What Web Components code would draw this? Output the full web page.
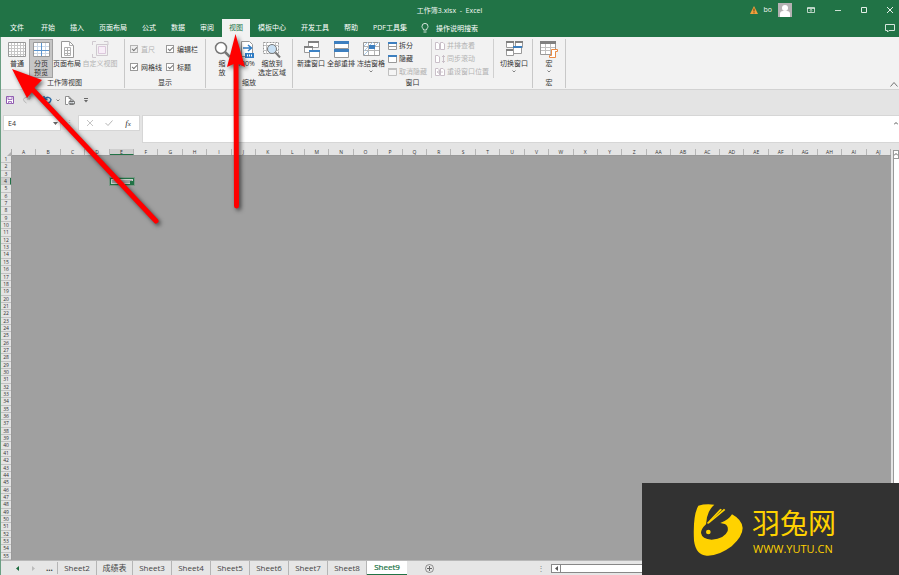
<!DOCTYPE html>
<html lang="zh-CN">
<head>
<meta charset="utf-8">
<title>工作簿3.xlsx - Excel</title>
<style>
  html, body { margin: 0; height: 100%; overflow: hidden; }
  body { font-family: "Open Sans", "Noto Sans CJK SC", sans-serif; font-size: 7px; color: #333; }
</style>
</head>
<body>
<excel-window></excel-window>
<script>
const RESET = `*{box-sizing:border-box}
button{font:inherit;color:inherit;background:none;border:0;padding:0;margin:0;cursor:pointer}
svg{display:block;flex:none}`;

const define = (name, css, html, setup) => customElements.define(name, class extends HTMLElement {
  constructor() {
    super();
    const t = document.createElement('template');
    t.innerHTML = `<style>${RESET}${css}</style>${typeof html === 'function' ? html(this) : html}`;
    this.attachShadow({ mode: 'open' }).append(t.content.cloneNode(true));
    if (setup) setup(this);
  }
});

const page = 'fill="#fff" stroke="#999"';
const ICONS = {
  normal: [18, 17, `<path d="M.5 1.500h17v14H.5z" ${page}/><path d="M3.500 2v13M6.500 2v13M9.500 2v13M12.500 2v13M15.500 2v13M1 4.500h16M1 7.500h16M1 10.500h16M1 13.500h16" stroke="#c6c6c6" fill="none"/>`],
  pagebreak: [17, 17, `<path d="M.5 1.500h16v14H.5z" ${page}/><path d="M4.500 2v13M12.500 2v13M1 5.500h15M1 12.500h15" stroke="#ccd9e8"/><path d="M8.500 2v13M1 9.500h15" stroke="#5b95cf"/>`],
  layout: [14, 17, `<path d="M1.500.5h8l4 4v12h-12z" ${page}/><path d="M9.500.5v4h4M4.500 6.500h6v8h-6zM4 9.500h7M4 12.500h7M7.500 6v9" fill="none" stroke="#b0b0b0"/>`],
  custom: [17, 17, `<g fill="none" stroke="#cfc9cf"><path d="M.5 4V.5H4M12 .5h4V4M.5 13v3.500H4"/><path d="M4.500 3.500h11v11h-11z"/><path d="M6.500 5.500h7v7h-7z" fill="#f8eef8" stroke="#dcc8dc"/></g>`],
  zoom: [17, 17, `<circle cx="7" cy="7" r="5.500" fill="#fff" stroke="#777" stroke-width="1.500"/><path d="M11 11l5 5" stroke="#777" stroke-width="2.500"/>`],
  hundred: [17, 17, `<path d="M3.500.5h8l3 3v12h-11z" ${page}/><path d="M5 7h8m-3-3 3.500 3L10 10" fill="none" stroke="#2f7cc4" stroke-width="1.500"/><path d="M7 12h9v5H7z" fill="#2f7cc4"/><path d="M9.500 13.500v2M11.500 13.500v2M13.500 13.500v2" stroke="#fff"/>`],
  zoomsel: [18, 17, `<path d="M.5 1.500h15v11H.5z" ${page} stroke-dasharray="2 1"/><path d="M3.500 2v10M12.500 2v10M1 4.500h14M1 9.500h14" stroke="#c0c0c0"/><circle cx="9" cy="8" r="4.500" fill="#c8e0f4" stroke="#777"/><path d="m12.500 11.500 4.500 5" stroke="#777" stroke-width="2"/>`],
  newwin: [17, 17, `<g ${page}><path d="M5.500 1.500h10v5h-10z"/><path d="M1.500 6.500h8v5h-8z"/><path d="M6.500 10.500h10v6h-10z"/></g><path d="M5 0h11v2H5zM1 5h9v2H1z" fill="#808080"/><path d="M6 9h11v2H6z" fill="#3d82c4"/>`],
  arrange: [15, 17, `<path d="M.5 1.500h14v6H.5zM.5 9.500h14v7H.5z" ${page}/><path d="M0 0h15v3H0zM0 8h15v3H0z" fill="#3d7fbf"/>`],
  freeze: [17, 17, `<path d="M.5 1.500h16v13H.5z" ${page}/><path d="M5.500 2v12M11.500 2v12M1 5.500h15M1 9.500h15" stroke="#b5b5b5"/><path d="M1 5l4-4M1 10l4-4M6 5l4-4M12 5l4-4M1 14l4-4" stroke="#a9c8e4"/><path d="M6 4h6v4H6z" fill="#3d7fbf"/>`],
  switch: [17, 17, `<g ${page}><path d="M.5 1.500h7v5h-7zM9.500 1.500h7v5h-7zM.5 9.500h7v5h-7z"/><path d="M7.500 6.500h8v6h-8z"/></g><path d="M0 0h8v2H0zM9 0h8v2H9zM0 8h7v2H0z" fill="#808080"/><path d="M7 5h9v2H7z" fill="#3d7fbf"/>`],
  macro: [18, 17, `<path d="M.5 1.500h15v12H.5z" ${page}/><path d="M0 0h16v3H0z" fill="#808080"/><path d="M5.500 3v10M10.500 3v10M1 6.500h14M1 9.500h14" stroke="#c0c0c0"/><path d="M11.500 8.500h6v2h-2v6h-6v-2h2z" fill="#fff" stroke="#e88a45"/>`],
  split: [9, 8, `<path d="M.5.5h8v7h-8zM0 4.500h9" ${page}/><path d="M0 0h9v2H0z" fill="#3d7fbf"/>`],
  hide: [9, 8, `<path d="M.5.5h8v7h-8z" ${page}/><path d="M0 0h9v2H0z" fill="#3d7fbf"/>`],
  unhide: [9, 8, `<path d="M.5.5h8v7h-8z" fill="#f5f5f5" stroke="#c0c0c0"/><path d="M0 0h9v2H0z" fill="#c0c0c0"/>`],
  side: [10, 8, `<path d="M.5.5H3l1.500 1.500v5.500h-4zM5.500.5H8L9.500 2v5.500h-4z" fill="#fff" stroke="#c9bfc8"/>`],
  sync: [10, 8, `<path d="M.5.5H3l1.500 1.500v5.500h-4z" fill="#fff" stroke="#c9bfc8"/><path d="M8.500 0v8M7 2l1.500-1.500L9.900 2M7 6l1.500 1.500L9.900 6" fill="none" stroke="#c9bfc8"/>`],
  reset: [10, 8, `<path d="M.5.5H3l1.500 1.500v5.500h-4zM5.500.5H8L9.500 2v5.500h-4z" fill="#fff" stroke="#c9bfc8"/><path d="M2 4h6M4 2.500 2 4l2 1.500" fill="none" stroke="#c9bfc8" stroke-width=".8"/>`],
  bulb: [8, 10, `<path d="M2.500 7C2.500 5.500 1 5 1 3.400a3 3 0 0 1 6 0C7 5 5.500 5.500 5.500 7zM2.500 9h3" fill="none" stroke="#fff" stroke-width=".8"/>`],
  comment: [10, 9, `<path d="M.5.5h9v6H4L2.500 8V6.500h-2z" fill="none" stroke="#d5e6dc"/>`],
  warn: [8, 8, `<path d="M4 0l4 8H0z" fill="#f0a03c"/><path d="M4 2.500v3M4 6.300v1" stroke="#5c3a12"/>`],
  user: [14, 14, `<path d="M0 0h14v14H0z" fill="#b5b1b3"/><circle cx="7" cy="5" r="3" fill="#fff"/><path d="M2 14V11q0-3 3-3h4q3 0 3 3v3z" fill="#fff"/>`],
  ribbonopt: [8, 6, `<path d="M.5.5h7v5h-7zM0 1.500h8M4 5V2.500M2.800 3.500 4 2.300l1.200 1.200" fill="none" stroke="#e2eee6" stroke-width=".8"/>`],
  min: [6, 6, `<path d="M0 3.500h6" stroke="#cde0d4"/>`],
  max: [6, 6, `<path d="M.5.5h5v5h-5z" fill="none" stroke="#e2eee6"/>`],
  close: [6, 6, `<path d="m0 0 6 6M6 0 0 6" stroke="#e8f2ec"/>`],
  save: [8, 8, `<path d="M.5.5h7v7h-7z" fill="#fff" stroke="#8f5ab0"/><path d="M2 .5h4v3H2zM2.500 5.500h3v2h-3z" fill="#f0e4f6" stroke="#8f5ab0" stroke-width=".8"/>`],
  redo: [9, 8, `<path d="M8 0v3H5M8 3Q3-.5 1.500 3.500q0 2 3 3.500" fill="none" stroke="#b8b8b8"/>`],
  undo: [9, 8, `<path d="M1 0v3.500h3.500M1 3Q6-.5 8 3.500q0 2.500-3 4" fill="none" stroke="#2d6da8" stroke-width="1.500"/>`],
  preview: [10, 9, `<path d="M3 8.500H.5v-8H4l2 2v2M4 .5v2h2" fill="#fff" stroke="#777" stroke-width=".8"/><path d="M4 5.500h5.500v2.500H4zM5.200 4h3v1.500h-3zM5.200 7.200h3v1.400h-3z" fill="#e8eef4" stroke="#666" stroke-width=".8"/>`],
  down: [4, 3, `<path d="m.5.5 1.500 1.500L3.500.5" fill="none" stroke="#666" stroke-width=".8"/>`],
  tri: [5, 3, `<path d="M0 0h5L2.500 3z" fill="#666"/>`],
  more: [4, 5, `<path d="M0 .5h4" stroke="#666"/><path d="M0 2h4L2 4.500z" fill="#666"/>`],
  collapse: [8, 5, `<path d="m.5 4.500 3.500-4 3.500 4" fill="none" stroke="#666" stroke-width=".9"/>`],
  up: [4, 3, `<path d="m0 2.500 2-2 2 2" fill="none" stroke="#555"/>`],
  cancel: [6, 6, `<path d="m0 0 6 6M6 0 0 6" stroke="#b5b5b5" stroke-width=".8"/>`],
  ok: [8, 6, `<path d="m.5 3 2.500 2.500L7.500.5" fill="none" stroke="#b5b5b5"/>`],
  left: [3, 5, `<path d="M3 0v5L0 2.500z" fill="#1b6b3d"/>`],
  right: [3, 5, `<path d="M0 0v5l3-2.500z" fill="#bcbcbc"/>`],
  sleft: [3, 5, `<path d="M3 0v5L0 2.500z" fill="#555"/>`],
  add: [9, 9, `<circle cx="4.500" cy="4.500" r="4" fill="none" stroke="#777" stroke-width=".8"/><path d="M2 4.500h5M4.500 2v5" stroke="#666"/>`],
  corner: [4, 4, `<path d="M4 0v4H0z" fill="#b0b0b0"/>`]
};
const icon = n => { const [w, h, b] = ICONS[n]; return `<svg width="${w}" height="${h}" viewBox="0 0 ${w} ${h}" aria-hidden="true">${b}</svg>`; };

/* title bar */
define('title-bar', `
:host{display:grid;grid-template-columns:1fr auto 1fr;align-items:center;height:19px;background:#217346;color:#f2f8f4}
.title{grid-column:2;white-space:pre}
.right{display:flex;align-items:center;justify-content:flex-end;gap:6px;padding-right:6px}
.win{display:flex;gap:20px;margin-left:9px}
button{display:flex}`,
`<span class="title">工作簿3.xlsx  -  Excel</span>
<div class="right">${icon('warn')}<span>bo</span>${icon('user')}
<div class="win"><button aria-label="功能区显示选项">${icon('ribbonopt')}</button><button aria-label="最小化">${icon('min')}</button><button aria-label="最大化">${icon('max')}</button><button aria-label="关闭">${icon('close')}</button></div></div>`);

/* ribbon tabs */
define('ribbon-tab', `
:host{display:block}
button{display:block;height:18px;padding:0 7px 2px;color:#fff;white-space:nowrap}
:host([active]) button{background:#f2f2f2;color:#217346}`,
`<button role="tab"><slot></slot></button>`);

define('ribbon-tabs', `
:host{display:flex;height:18px;background:#217346;gap:1px;padding:0 4px 0 3px;color:#fff;align-items:center}
ribbon-tab:first-of-type{margin-right:2px}
.tell{display:flex;align-items:center;gap:7px;margin-left:6px;white-space:nowrap}
.note{margin-left:auto}`,
`${['文件', '开始', '插入', '页面布局', '公式', '数据', '审阅', '视图', '模板中心', '开发工具', '帮助', 'PDF工具集']
  .map(t => `<ribbon-tab${t === '视图' ? ' active' : ''}>${t}</ribbon-tab>`).join('')}
<button class="tell">${icon('bulb')}<span>操作说明搜索</span></button><button class="note" aria-label="批注">${icon('comment')}</button>`);

/* ribbon pieces */
define('ribbon-group', `
:host{display:flex;flex-direction:column;border-right:1px solid #c8c8c8;margin:2px 0 1px;flex:none}
.body{display:flex;flex:1;align-items:flex-start}
.label{text-align:center;line-height:9px;height:10px}`,
h => `<div class="body"><slot></slot></div><div class="label">${h.getAttribute('label')}</div>`);

define('big-button', `
:host{display:block;flex:none}
button{display:flex;flex-direction:column;align-items:center;width:100%;height:39px;padding-top:2px;line-height:9px;white-space:nowrap}
.pic{height:17px}
.pic+span{margin-top:1px}
.chev{margin-top:2px}
:host([active]) button{background:#c6c6c6;outline:1px solid #a0a0a0;outline-offset:-1px}
:host([off]) button{color:#b3b3b3}`,
h => `<button>${`<span class="pic">${icon(h.getAttribute('icon'))}</span>`}<span>${h.getAttribute('label').replace('|', '<br>')}</span>${h.hasAttribute('menu') ? `<span class="chev">${icon('down')}</span>` : ''}</button>`);

define('small-button', `
:host{display:block}
button{display:flex;align-items:center;gap:2px;height:13px;line-height:9px;white-space:nowrap}
:host([off]) button{color:#b3b3b3}`,
h => `<button>${icon(h.getAttribute('icon'))}<span>${h.getAttribute('label')}</span></button>`);

define('check-item', `
:host{display:block}
label{display:flex;align-items:center;gap:3px;height:18px;white-space:nowrap}
input{appearance:none;margin:0;width:8px;height:8px;border:1px solid #999;background:#fff;display:grid;place-items:center}
input:checked::after{content:"";width:4px;height:2px;border:solid #777;border-width:0 0 1px 1px;transform:rotate(-45deg);margin-bottom:1px}
:host([off]) label{color:#b3b3b3}
:host([off]) input{border-color:#b3b3b3;background:#eee}`,
h => `<label><input type="checkbox" checked${h.hasAttribute('off') ? ' disabled' : ''}><span>${h.getAttribute('label')}</span></label>`);

define('ribbon-bar', `
:host{display:flex;height:53px;background:#f2f2f2;border-bottom:1px solid #d2d2d2}
.w18{width:18px}.w22{width:22px}.w24{width:24px}.w28{width:28px}.w30{width:30px}.w38{width:38px}
.views{width:124px;padding-left:4px}
.show{width:81px}.checks{display:grid;grid-template-columns:36px 36px;padding:1px 0 0 5px}
.zoom{width:87px}.zoom .w18{margin:0 4px 0 7px}
.window{width:240px}.window .w30:first-of-type{margin-left:3px}
.stack{padding-left:2px}
.stack+.stack{margin-left:4px;padding-left:3px}
.line{border-left:1px solid #d0d0d0}
.switch{margin-left:4px;padding-left:2px}
.macros{width:33px}
.macros big-button{width:32px}
.collapse{margin-left:auto;align-self:flex-end;padding:0 1px 2px}`,
`<ribbon-group class="views" label="工作簿视图"><big-button class="w24" icon="normal" label="普通"></big-button><big-button class="w24" active icon="pagebreak" label="分页|预览"></big-button><big-button class="w28" icon="layout" label="页面布局"></big-button><big-button class="w38" off icon="custom" label="自定义视图"></big-button></ribbon-group>
<ribbon-group class="show" label="显示"><div class="checks"><check-item off label="直尺"></check-item><check-item label="编辑栏"></check-item><check-item label="网格线"></check-item><check-item label="标题"></check-item></div></ribbon-group>
<ribbon-group class="zoom" label="缩放"><big-button class="w18" icon="zoom" label="缩|放"></big-button><big-button class="w22" icon="hundred" label="100%"></big-button><big-button class="w30" icon="zoomsel" label="缩放到|选定区域"></big-button></ribbon-group>
<ribbon-group class="window" label="窗口"><big-button class="w30" icon="newwin" label="新建窗口"></big-button><big-button class="w30" icon="arrange" label="全部重排"></big-button><big-button class="w30" menu icon="freeze" label="冻结窗格"></big-button>
<div class="stack"><small-button icon="split" label="拆分"></small-button><small-button icon="hide" label="隐藏"></small-button><small-button off icon="unhide" label="取消隐藏"></small-button></div>
<div class="stack line"><small-button off icon="side" label="并排查看"></small-button><small-button off icon="sync" label="同步滚动"></small-button><small-button off icon="reset" label="重设窗口位置"></small-button></div>
<div class="switch line"><big-button class="w30" menu icon="switch" label="切换窗口"></big-button></div></ribbon-group>
<ribbon-group class="macros" label="宏"><big-button menu icon="macro" label="宏"></big-button></ribbon-group>
<button class="collapse" aria-label="折叠功能区">${icon('collapse')}</button>`);

/* quick access toolbar */
define('quick-access', `
:host{display:flex;align-items:center;height:22px;padding:0 0 2px 5px;background:#e4e4e4}
button{display:flex;align-items:center;gap:4px}
.a{margin-left:8px}.b{margin-left:12px}.c{margin-left:5px}.d{margin-left:9px}`,
`<button aria-label="保存">${icon('save')}</button><button class="a" aria-label="恢复">${icon('redo')}</button><button class="b" aria-label="撤消">${icon('undo')}${icon('down')}</button><button class="c" aria-label="打印预览">${icon('preview')}</button><button class="d" aria-label="自定义">${icon('more')}</button>`);

/* formula bar */
define('formula-bar', `
:host{display:flex;align-items:flex-start;padding:3px 0 6px 2px;background:#e4e4e4}
.name,.tools{display:flex;align-items:center;height:16px;background:#fff;border:1px solid #d6d6d6}
.name{width:58px;padding-right:2px}
input{font:inherit;color:inherit;border:0;padding:0 4px;margin:0;outline:0;background:none;min-width:0;flex:1;align-self:stretch}
.dots{align-self:flex-start;width:17px;height:15px;display:grid;place-items:center;color:#aaa}
.tools{width:62px;justify-content:space-around;padding:0 2px}
.fx{font:italic 9px "Liberation Serif",serif}
.fx small{font-size:7px}
.entry{display:flex;align-items:flex-start;flex:1;margin-left:2px;height:28px;background:#fff;border:1px solid #d6d6d6;border-right:0;padding-right:1px}
.entry button{padding-top:6px}`,
`<div class="name"><input aria-label="名称框" value="E4">${icon('tri')}</div><span class="dots">⋮</span>
<div class="tools"><button aria-label="取消">${icon('cancel')}</button><button aria-label="输入">${icon('ok')}</button><button class="fx" aria-label="插入函数">f<small>x</small></button></div>
<div class="entry"><input aria-label="编辑栏"><button aria-label="折叠编辑栏">${icon('up')}</button></div>`);

/* worksheet */
const letters = Array.from({ length: 36 }, (_, i) => i < 26 ? String.fromCharCode(65 + i) : 'A' + String.fromCharCode(39 + i));
define('work-sheet', `
:host{display:grid;grid-template:7px minmax(0,1fr)/11px minmax(0,1fr) 8px;flex:1;min-height:0;background:#e4e4e4;font-size:5px;line-height:6px;color:#333}
.corner{display:grid;place-items:end;border-right:1px solid #aaa}
.cols{display:grid;grid-template-columns:repeat(36,minmax(0,1fr));text-align:center;border-bottom:1px solid #999}
.cols span{border-right:1px solid #b5b5b5;height:6px}
.rows{display:grid;grid-template-rows:repeat(55,minmax(0,1fr));text-align:center;border-right:1px solid #999}
.rows span{border-bottom:1px solid #c2c2c2}
.cols .on{background:#cfcfcf;border-bottom:1px solid #217346}
.rows .on{background:#cfcfcf;border-right:1px solid #217346}
.cells{display:grid;grid-template:repeat(55,minmax(0,1fr))/repeat(36,minmax(0,1fr));background:#a0a0a0;overflow:hidden}
.sel{grid-area:4/5;border:1px solid #217346;box-shadow:inset 0 0 0 1px #c8d0cb;outline:1px solid #7d9988;display:grid;place-items:end}
.sel i{width:3px;height:3px;background:#217346}
.bar{grid-area:1/3/3/4;margin:1px 0 0 2px;border-left:1px solid #999;background:#fff}
.bar button{display:grid;place-items:center;width:100%;height:9px;border:1px solid #999;border-left:0}`,
`<div class="corner">${icon('corner')}</div><div class="cols">${letters.map(l => `<span${l === 'E' ? ' class="on"' : ''}>${l}</span>`).join('')}</div>
<div class="bar"><button aria-label="向上滚动">${icon('up')}</button></div>
<div class="rows">${Array.from({ length: 55 }, (_, i) => `<span${i === 3 ? ' class="on"' : ''}>${i + 1}</span>`).join('')}</div>
<div class="cells"><div class="sel"><i></i></div></div>`);

/* sheet tabs */
define('sheet-tab', `
:host{display:block;width:39px;border-right:1px solid #b5b5b5}
:host([short]){width:36px}
button{display:block;width:100%;height:14px;padding-bottom:1px;text-align:center;color:#444}
:host([active]){width:40px;border:0}
:host([active]) button{background:#fff;color:#217346;border-bottom:1px solid #217346;-webkit-text-stroke:.2px #217346}`,
`<button role="tab"><slot></slot></button>`);

define('sheet-tabs', `
:host{display:flex;align-items:center;height:15px;background:#e6e6e6;border-top:1px solid #b8b8b8;font-size:8px;line-height:12px}
.nav{display:flex;align-items:center;width:57px;padding-left:15px;gap:13px;border-right:1px solid #b5b5b5;height:12px}
.nav span{margin-left:-2px;font-weight:700}
.add{margin-left:18px}
.scroll{display:flex;flex:0 1 339px;height:9px;border:1px solid #888;background:#fff;margin-right:9px}
.scroll button{width:9px;border-right:1px solid #888;display:grid;place-items:center}
.grip{margin-left:auto;padding-right:6px;color:#888}`,
`<div class="nav"><button aria-label="上一张">${icon('left')}</button><button aria-label="下一张">${icon('right')}</button><span>...</span></div>
${['Sheet2', '成绩表', 'Sheet3', 'Sheet4', 'Sheet5', 'Sheet6', 'Sheet7', 'Sheet8', 'Sheet9'].map(s => `<sheet-tab${s === '成绩表' ? ' short' : ''}${s === 'Sheet9' ? ' active' : ''}>${s}</sheet-tab>`).join('')}
<button class="add" aria-label="新工作表">${icon('add')}</button><span class="grip">⋮</span><div class="scroll"><button aria-label="向左滚动">${icon('sleft')}</button></div>`);

/* site badge over the bottom right corner */
define('site-badge', `
:host{display:flex;align-items:center;justify-content:center;gap:2px;width:257px;height:92px;background:#323232;color:#ffd200;padding-right:15px;box-sizing:border-box}
a{color:inherit;text-decoration:none;display:block}
.cn{display:block;font:400 28px/40px "Noto Sans CJK SC",sans-serif}
.en{display:block;font:400 11px/14px "Open Sans",sans-serif;padding-left:1px}`,
`<svg width="60" height="60" viewBox="0 0 180 180" fill="#ffd200" aria-hidden="true">
<path d="M25 20Q45 14 73 17Q57 30 51 55L48 76Q33 90 33 102Q36 120 65 122Q104 119 113 96Q116 80 104 75L91 72Q116 63 126 46Q156 62 158 87Q158 112 125 142Q85 172 50 170Q18 168 12 125Q8 50 25 20Z"/>
<path d="M50 73L91 29L96 32L67 60L102 29L106 33L56 74Z"/><circle cx="55" cy="99" r="7"/></svg>
<a href="#"><span class="cn">羽兔网</span><span class="en">WWW.YUTU.CN</span></a>`);

/* red pointer arrows */
define('pointer-arrows', `:host{display:block;width:260px;height:240px;pointer-events:none}`,
`<svg width="260" height="240" viewBox="0 0 260 240" style="overflow:visible;filter:drop-shadow(2px 2px 2px rgba(0,0,0,.6))" fill="#f00" stroke-linecap="round" aria-hidden="true">
<path d="M33 90L156 221" stroke="#f00" stroke-width="5"/><path d="M12 69L42 80L35 87L33 91L27 98Z"/>
<path d="M236 60L236.500 206" stroke="#f00" stroke-width="5"/><path d="M235.500 34L245 67L236 63L227 67Z"/></svg>`);

define('excel-window', `
:host{display:flex;flex-direction:column;height:100vh;min-height:400px;position:relative;overflow:hidden}
.main{display:flex;flex-direction:column;flex:1;min-height:0;border-left:1px solid #6b9f83}
pointer-arrows{position:absolute;left:0;top:0}
site-badge{position:absolute;right:0;bottom:0}`,
`<title-bar></title-bar><ribbon-tabs role="tablist"></ribbon-tabs>
<div class="main"><ribbon-bar></ribbon-bar><quick-access></quick-access><formula-bar></formula-bar><work-sheet></work-sheet><sheet-tabs></sheet-tabs></div>
<pointer-arrows></pointer-arrows><site-badge></site-badge>`);
</script>
</body>
</html>
